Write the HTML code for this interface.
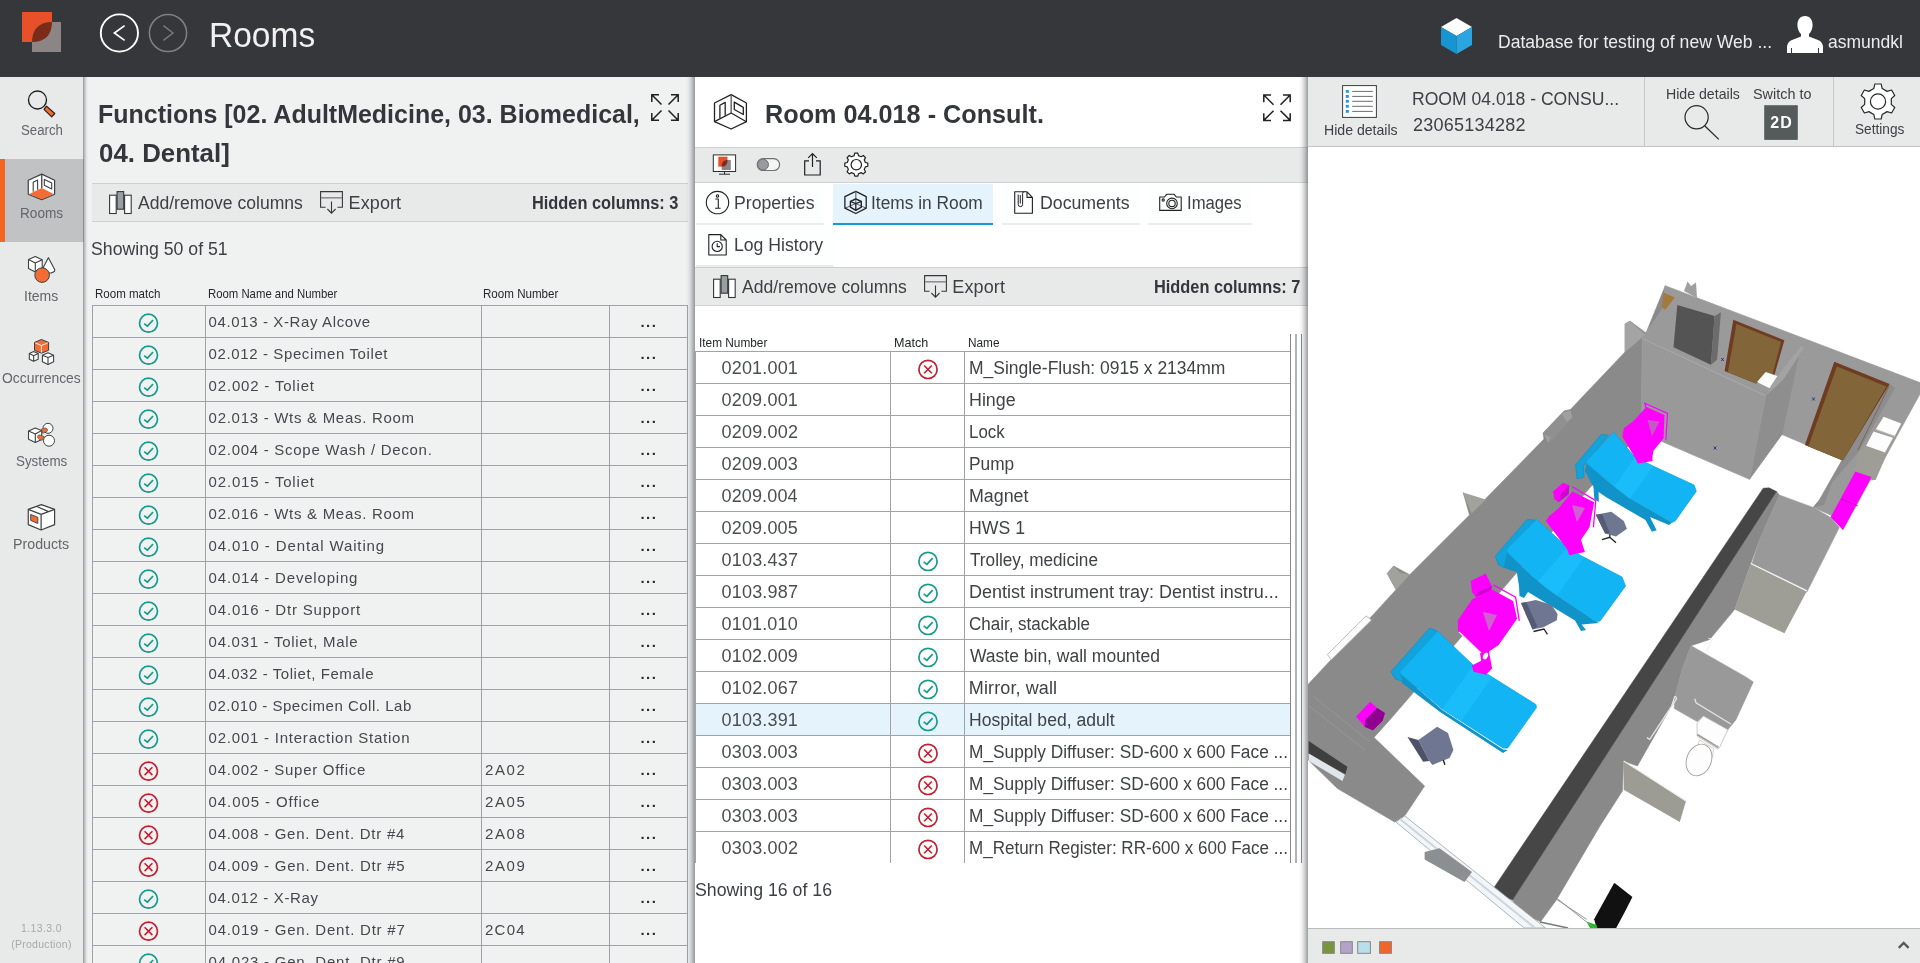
<!DOCTYPE html>
<html lang="en">
<head>
<meta charset="utf-8">
<title>Rooms</title>
<style>
*{box-sizing:border-box;margin:0;padding:0}
html,body{width:1920px;height:963px;overflow:hidden;background:#fff}
body{font-family:"Liberation Sans",sans-serif;color:#3d4044;font-size:16px;position:relative}
#app{position:absolute;left:0;top:0;width:1920px;height:963px;overflow:hidden;will-change:transform}
.abs{position:absolute}
.t{position:absolute;white-space:pre;line-height:1}
svg{position:absolute;overflow:visible}
#top{position:absolute;left:0;top:0;width:1920px;height:77px;background:#35373a}
#nav{position:absolute;left:0;top:77px;width:84px;height:886px;background:#e8eaea}
#p1{position:absolute;left:84px;top:77px;width:611px;height:886px;background:#f0f2f2}
#p2{position:absolute;left:695px;top:77px;width:613px;height:886px;background:#fff}
#p3{position:absolute;left:1308px;top:77px;width:612px;height:886px;background:#fff}
.hl{position:absolute;height:1px;background:#9fa3a5}
.vl{position:absolute;width:1px;background:#9fa3a5}
.tb{position:absolute;background:#e8eaea;border-top:1px solid #cfd1d1;border-bottom:1px solid #cfd1d1}
.nl{color:#5d6064}
</style>
</head>
<body>
<div id="app">
<div id="top"></div>
<svg style="left:0;top:0" width="90" height="77" viewBox="0 0 90 77">
<rect x="22" y="12" width="30" height="30" fill="#e8502a"/>
<path d="M32,42 C32,29 39,22 52,22 L61,22 L61,52 L32,52 Z" fill="#8b8685"/>
<path d="M32,42 C32,29 39,22 52,22 C52,35 45,42 32,42 Z" fill="#7c2b19"/>
</svg>
<svg style="left:95px;top:8px" width="100" height="50" viewBox="95 8 100 50" fill="none">
<circle cx="119.4" cy="33" r="18.6" stroke="#fff" stroke-width="1.9"/>
<path d="M124.6,25.6 L114.4,33 L124.6,40.4" stroke="#fff" stroke-width="1.7"/>
<circle cx="168" cy="33" r="18.6" stroke="#808284" stroke-width="1.5"/>
<path d="M163.4,25.6 L173,33 L163.4,40.4" stroke="#77797b" stroke-width="1.5"/>
</svg>
<span class="t" style="left:209.45px;top:17.20px;font-size:35.2px;color:#f1f1f1;transform:scaleX(0.9524);transform-origin:0 0">Rooms</span>
<svg style="left:1436px;top:14px" width="42" height="46" viewBox="1436 14 42 46">
<polygon points="1441,27 1456.5,18 1472,27 1456.5,36" fill="#fdfdfd"/>
<polygon points="1441,27 1456.5,36 1456.5,54 1441,45" fill="#1794d1"/>
<polygon points="1472,27 1456.5,36 1456.5,54 1472,45" fill="#2aa5df"/>
</svg>
<span class="t" style="left:1497.96px;top:32.55px;font-size:18.5px;color:#ececec;transform:scaleX(0.9495);transform-origin:0 0">Database for testing of new Web ...</span>
<svg style="left:1784px;top:14px" width="42" height="42" viewBox="1784 14 42 42">
<path d="M1805,16 c5.2,0 7.6,4.2 7.6,9 c0,4 -1.6,7.2 -3.6,9 l0,2.6 l9,3.4 c3,1.2 5,3.6 5,7 l0,6 l-4,0 l0,-5 l-1,0 l0,5 l-26,0 l0,-5 l-1,0 l0,5 l-4,0 l0,-6 c0,-3.4 2,-5.8 5,-7 l9,-3.4 l0,-2.6 c-2,-1.8 -3.6,-5 -3.6,-9 c0,-4.8 2.4,-9 7.6,-9 z" fill="#fff"/>
</svg>
<span class="t" style="left:1828.26px;top:32.55px;font-size:18.5px;color:#ececec;transform:scaleX(0.9460);transform-origin:0 0">asmundkl</span>
<div id="nav"></div>
<div class="abs" style="left:0px;top:159px;width:83.5px;height:83px;background:#c0c2c3;"></div>
<div class="abs" style="left:0px;top:159px;width:4.5px;height:83px;background:#f26522;"></div>
<svg style="left:0;top:77px" width="84" height="480" viewBox="0 77 84 480" fill="none" stroke-linejoin="round">
<circle cx="37.5" cy="100" r="9" stroke="#1b1b1b" stroke-width="1.35"/>
<polygon points="46.5,106.2 54.8,113.5 51.7,116.8 44,109.3" fill="#f26a2e" stroke="#1b1b1b" stroke-width="1.1"/>
<!-- rooms -->
<polygon points="41.75,174.1 54.6,180.3 54.6,194.2 41.75,199.6 28.25,194.2 28.25,180.3" fill="#fff" stroke="#3c4144" stroke-width="1.2"/>
<polygon points="41.75,188 53.6,193.9 41.75,199.2 29.3,193.9" fill="#f26c33"/>
<path d="M41.75,174.1 V188" stroke="#3c4144" stroke-width="1.3"/>
<path d="M33.2,191.7 V182.2 L37.6,180.1 V189.7" stroke="#3c4144" stroke-width="1.1"/>
<polygon points="44.3,179.4 51.7,183 51.7,189 44.3,185.3" stroke="#3c4144" stroke-width="1.1"/>
<!-- items -->
<polygon points="35.3,256.5 42.2,259.8 42.2,268.5 35.3,272 28.5,268.5 28.5,259.6" fill="#fff" stroke="#3c4144" stroke-width="1.1"/>
<path d="M28.5,259.6 L35.3,263.1 L42.2,259.8 M35.3,263.1 V272" stroke="#3c4144" stroke-width="1.1"/>
<path d="M48.4,257.7 L43.2,267.5 Q46,274 51.3,272.9 Q55,272 54.8,269.8 Z" fill="#fff" stroke="#3c4144" stroke-width="1.1"/>
<circle cx="42.1" cy="275.1" r="7.3" fill="#f26c33" stroke="#3c4144" stroke-width="1"/>
<!-- occurrences -->
<polygon points="41.4,339.5 48.6,342.4 48.6,350.3 41.4,353.2 34.5,350.3 34.5,342.4" fill="#f26c33" stroke="#3c4144" stroke-width="1"/>
<path d="M35.3,342.9 L41.4,345.5 L47.8,342.9 M41.4,345.5 V352.5" stroke="#fff" stroke-width="0.9"/>
<polygon points="33.65,351.5 38.2,353.6 38.2,359.2 33.65,361.3 29.3,359.2 29.3,353.6" fill="#fff" stroke="#3c4144" stroke-width="1.1"/>
<path d="M29.3,353.6 L33.65,355.7 L38.2,353.6 M33.65,355.7 V361.3" stroke="#3c4144" stroke-width="1.1"/>
<polygon points="48,352.8 53.6,355.3 53.6,361.7 48,364.4 42.4,361.7 42.4,355.3" fill="#fff" stroke="#3c4144" stroke-width="1.1"/>
<path d="M42.4,355.3 L48,357.5 L53.6,355.3 M48,357.5 V364.4" stroke="#3c4144" stroke-width="1.1"/>
<!-- systems -->
<polygon points="35.3,428.1 41.7,430.4 41.7,439.6 35.3,442.4 28.5,439.3 28.5,431" fill="#fff" stroke="#3c4144" stroke-width="1.1"/>
<path d="M28.5,431 L35.3,433.9 L41.7,430.4 M35.3,433.9 V442.4" stroke="#3c4144" stroke-width="1.1"/>
<circle cx="48" cy="428.3" r="5" fill="#fff" stroke="#3c4144" stroke-width="1"/>
<circle cx="49" cy="440.7" r="5.5" fill="#fff" stroke="#3c4144" stroke-width="1"/>
<path d="M41.5,429.1 L45.1,427.9 Q48,428.6 47.6,430.4 L46.7,431.6 L42.6,433.3 Z" fill="#f26c33" stroke="#3c4144" stroke-width="0.6"/>
<path d="M37.6,436.2 Q38.2,434.6 39.7,434.9 L44.2,436.6 L42.2,440.3 L39.3,439.5 Q37.2,438.3 37.6,436.2 Z" fill="#f26c33" stroke="#3c4144" stroke-width="0.6"/>
<!-- products -->
<polygon points="41.4,504.6 54.6,509.4 54.6,524.6 41.1,530 28.25,524.6 28.25,509.4" fill="#fff" stroke="#3c4144" stroke-width="1.2"/>
<path d="M28.25,509.4 L41.1,514.4 L54.6,509.4 M41.1,514.4 V530 M36.8,506.5 L48.6,511.6" stroke="#3c4144" stroke-width="1.2"/>
<polygon points="30.7,514.4 37.8,517.3 37.8,523.5 30.7,520.4" fill="#f26c33" stroke="#3c4144" stroke-width="0.9"/>
</svg>
<span class="t" style="left:20.65px;top:122.10px;font-size:15.4px;color:#63666a;transform:scaleX(0.8605);transform-origin:0 0">Search</span>
<span class="t" style="left:19.63px;top:205.10px;font-size:15.4px;color:#63666a;transform:scaleX(0.8843);transform-origin:0 0">Rooms</span>
<span class="t" style="left:23.95px;top:288.10px;font-size:15.4px;color:#63666a;transform:scaleX(0.9113);transform-origin:0 0">Items</span>
<span class="t" style="left:2.04px;top:370.10px;font-size:15.4px;color:#63666a;transform:scaleX(0.9027);transform-origin:0 0">Occurrences</span>
<span class="t" style="left:15.79px;top:453.10px;font-size:15.4px;color:#63666a;transform:scaleX(0.8691);transform-origin:0 0">Systems</span>
<span class="t" style="left:13.08px;top:536.10px;font-size:15.4px;color:#63666a;transform:scaleX(0.9248);transform-origin:0 0">Products</span>
<span class="t" style="left:20.95px;top:923.05px;font-size:10.5px;letter-spacing:0.394px;color:#a7a9ab">1.13.3.0</span>
<span class="t" style="left:11.15px;top:939.05px;font-size:10.5px;letter-spacing:0.282px;color:#a7a9ab">(Production)</span>
<div id="p1"></div>
<span class="t" style="left:98.33px;top:101.30px;font-size:26px;font-weight:bold;color:#33363a;transform:scaleX(0.9608);transform-origin:0 0">Functions [02. AdultMedicine, 03. Biomedical,</span>
<span class="t" style="left:98.98px;top:140.30px;font-size:26px;font-weight:bold;color:#33363a;transform:scaleX(0.9945);transform-origin:0 0">04. Dental]</span>
<svg style="left:640px;top:88px" width="50" height="40" viewBox="640 88 50 40"><g stroke="#1e2022" stroke-width="1.5" fill="none"><path d="M661.5,104.5 L651.8,94.8 M659,94.8 H651.8 V102"/><path d="M668.5,104.5 L678.2,94.8 M671,94.8 H678.2 V102"/><path d="M661.5,110.5 L651.8,120.2 M659,120.2 H651.8 V113"/><path d="M668.5,110.5 L678.2,120.2 M671,120.2 H678.2 V113"/></g></svg>
<div class="tb" style="left:92px;top:183px;width:596px;height:39px"></div>
<svg style="left:100px;top:186px" width="260" height="34" viewBox="100 186 260 34"><g stroke="#33383b" stroke-width="1.1"><rect x="109.6" y="195.2" width="6.6" height="18.3" fill="#fff"/><rect x="124.6" y="195.2" width="6.6" height="18.3" fill="#fff"/><rect x="117.1" y="191.6" width="6.6" height="17.6" fill="#9a9ea0"/></g><g stroke="#33383b" stroke-width="1.1" fill="none"><path d="M325.6,207.3 H320.6 V191.6 H342.4 V207.3 H337.4"/><path d="M321,197.8 H342" stroke="#8d9194" stroke-width="1.6"/><path d="M331.5,201.5 V213 M327.4,209 L331.5,213.2 L335.6,209"/></g></svg>
<span class="t" style="left:138.27px;top:194.30px;font-size:18px;color:#3d4044;transform:scaleX(0.9751);transform-origin:0 0">Add/remove columns</span>
<span class="t" style="left:348.52px;top:194.30px;font-size:18px;letter-spacing:0.115px;color:#3d4044">Export</span>
<span class="t" style="left:531.71px;top:194.30px;font-size:18px;font-weight:bold;color:#33363a;transform:scaleX(0.9091);transform-origin:0 0">Hidden columns: 3</span>
<span class="t" style="left:90.95px;top:240.30px;font-size:18px;color:#3d4044;transform:scaleX(0.9824);transform-origin:0 0">Showing 50 of 51</span>
<span class="t" style="left:94.55px;top:287.30px;font-size:13px;color:#25282b;transform:scaleX(0.8880);transform-origin:0 0">Room match</span>
<span class="t" style="left:207.67px;top:287.30px;font-size:13px;color:#25282b;transform:scaleX(0.8730);transform-origin:0 0">Room Name and Number</span>
<span class="t" style="left:483.45px;top:287.30px;font-size:13px;color:#25282b;transform:scaleX(0.8913);transform-origin:0 0">Room Number</span>
<div class="hl" style="left:92px;top:305px;width:596px"></div>
<div class="hl" style="left:92px;top:337px;width:596px"></div>
<div class="hl" style="left:92px;top:369px;width:596px"></div>
<div class="hl" style="left:92px;top:401px;width:596px"></div>
<div class="hl" style="left:92px;top:433px;width:596px"></div>
<div class="hl" style="left:92px;top:465px;width:596px"></div>
<div class="hl" style="left:92px;top:497px;width:596px"></div>
<div class="hl" style="left:92px;top:529px;width:596px"></div>
<div class="hl" style="left:92px;top:561px;width:596px"></div>
<div class="hl" style="left:92px;top:593px;width:596px"></div>
<div class="hl" style="left:92px;top:625px;width:596px"></div>
<div class="hl" style="left:92px;top:657px;width:596px"></div>
<div class="hl" style="left:92px;top:689px;width:596px"></div>
<div class="hl" style="left:92px;top:721px;width:596px"></div>
<div class="hl" style="left:92px;top:753px;width:596px"></div>
<div class="hl" style="left:92px;top:785px;width:596px"></div>
<div class="hl" style="left:92px;top:817px;width:596px"></div>
<div class="hl" style="left:92px;top:849px;width:596px"></div>
<div class="hl" style="left:92px;top:881px;width:596px"></div>
<div class="hl" style="left:92px;top:913px;width:596px"></div>
<div class="hl" style="left:92px;top:945px;width:596px"></div>
<div class="vl" style="left:92px;top:305px;height:658px"></div>
<div class="vl" style="left:205px;top:305px;height:658px"></div>
<div class="vl" style="left:481px;top:305px;height:658px"></div>
<div class="vl" style="left:609px;top:305px;height:658px"></div>
<div class="vl" style="left:687px;top:305px;height:658px"></div>
<span class="t" style="left:208.61px;top:314.30px;font-size:15px;letter-spacing:0.615px;color:#45484c">04.013 - X-Ray Alcove</span>
<span class="t" style="left:640.58px;top:314.30px;font-size:15px;letter-spacing:1.368px;font-weight:bold;color:#2a2d30">...</span>
<span class="t" style="left:208.61px;top:346.30px;font-size:15px;letter-spacing:0.612px;color:#45484c">02.012 - Specimen Toilet</span>
<span class="t" style="left:640.58px;top:346.30px;font-size:15px;letter-spacing:1.368px;font-weight:bold;color:#2a2d30">...</span>
<span class="t" style="left:208.61px;top:378.30px;font-size:15px;letter-spacing:0.816px;color:#45484c">02.002 - Toliet</span>
<span class="t" style="left:640.58px;top:378.30px;font-size:15px;letter-spacing:1.368px;font-weight:bold;color:#2a2d30">...</span>
<span class="t" style="left:208.61px;top:410.30px;font-size:15px;letter-spacing:0.711px;color:#45484c">02.013 - Wts &amp; Meas. Room</span>
<span class="t" style="left:640.58px;top:410.30px;font-size:15px;letter-spacing:1.368px;font-weight:bold;color:#2a2d30">...</span>
<span class="t" style="left:208.61px;top:442.30px;font-size:15px;letter-spacing:0.723px;color:#45484c">02.004 - Scope Wash / Decon.</span>
<span class="t" style="left:640.58px;top:442.30px;font-size:15px;letter-spacing:1.368px;font-weight:bold;color:#2a2d30">...</span>
<span class="t" style="left:208.61px;top:474.30px;font-size:15px;letter-spacing:0.816px;color:#45484c">02.015 - Toliet</span>
<span class="t" style="left:640.58px;top:474.30px;font-size:15px;letter-spacing:1.368px;font-weight:bold;color:#2a2d30">...</span>
<span class="t" style="left:208.61px;top:506.30px;font-size:15px;letter-spacing:0.711px;color:#45484c">02.016 - Wts &amp; Meas. Room</span>
<span class="t" style="left:640.58px;top:506.30px;font-size:15px;letter-spacing:1.368px;font-weight:bold;color:#2a2d30">...</span>
<span class="t" style="left:208.61px;top:538.30px;font-size:15px;letter-spacing:0.880px;color:#45484c">04.010 - Dental Waiting</span>
<span class="t" style="left:640.58px;top:538.30px;font-size:15px;letter-spacing:1.368px;font-weight:bold;color:#2a2d30">...</span>
<span class="t" style="left:208.61px;top:570.30px;font-size:15px;letter-spacing:0.810px;color:#45484c">04.014 - Developing</span>
<span class="t" style="left:640.58px;top:570.30px;font-size:15px;letter-spacing:1.368px;font-weight:bold;color:#2a2d30">...</span>
<span class="t" style="left:208.61px;top:602.30px;font-size:15px;letter-spacing:0.830px;color:#45484c">04.016 - Dtr Support</span>
<span class="t" style="left:640.58px;top:602.30px;font-size:15px;letter-spacing:1.368px;font-weight:bold;color:#2a2d30">...</span>
<span class="t" style="left:208.61px;top:634.30px;font-size:15px;letter-spacing:0.712px;color:#45484c">04.031 - Toliet, Male</span>
<span class="t" style="left:640.58px;top:634.30px;font-size:15px;letter-spacing:1.368px;font-weight:bold;color:#2a2d30">...</span>
<span class="t" style="left:208.61px;top:666.30px;font-size:15px;letter-spacing:0.575px;color:#45484c">04.032 - Toliet, Female</span>
<span class="t" style="left:640.58px;top:666.30px;font-size:15px;letter-spacing:1.368px;font-weight:bold;color:#2a2d30">...</span>
<span class="t" style="left:208.61px;top:698.30px;font-size:15px;letter-spacing:0.513px;color:#45484c">02.010 - Specimen Coll. Lab</span>
<span class="t" style="left:640.58px;top:698.30px;font-size:15px;letter-spacing:1.368px;font-weight:bold;color:#2a2d30">...</span>
<span class="t" style="left:208.61px;top:730.30px;font-size:15px;letter-spacing:0.772px;color:#45484c">02.001 - Interaction Station</span>
<span class="t" style="left:640.58px;top:730.30px;font-size:15px;letter-spacing:1.368px;font-weight:bold;color:#2a2d30">...</span>
<span class="t" style="left:208.61px;top:762.30px;font-size:15px;letter-spacing:0.722px;color:#45484c">04.002 - Super Office</span>
<span class="t" style="left:484.95px;top:762.30px;font-size:15px;letter-spacing:1.654px;color:#45484c">2A02</span>
<span class="t" style="left:640.58px;top:762.30px;font-size:15px;letter-spacing:1.368px;font-weight:bold;color:#2a2d30">...</span>
<span class="t" style="left:208.61px;top:794.30px;font-size:15px;letter-spacing:0.909px;color:#45484c">04.005 - Office</span>
<span class="t" style="left:484.95px;top:794.30px;font-size:15px;letter-spacing:1.612px;color:#45484c">2A05</span>
<span class="t" style="left:640.58px;top:794.30px;font-size:15px;letter-spacing:1.368px;font-weight:bold;color:#2a2d30">...</span>
<span class="t" style="left:208.61px;top:826.30px;font-size:15px;letter-spacing:0.762px;color:#45484c">04.008 - Gen. Dent. Dtr #4</span>
<span class="t" style="left:484.95px;top:826.30px;font-size:15px;letter-spacing:1.620px;color:#45484c">2A08</span>
<span class="t" style="left:640.58px;top:826.30px;font-size:15px;letter-spacing:1.368px;font-weight:bold;color:#2a2d30">...</span>
<span class="t" style="left:208.61px;top:858.30px;font-size:15px;letter-spacing:0.770px;color:#45484c">04.009 - Gen. Dent. Dtr #5</span>
<span class="t" style="left:484.95px;top:858.30px;font-size:15px;letter-spacing:1.639px;color:#45484c">2A09</span>
<span class="t" style="left:640.58px;top:858.30px;font-size:15px;letter-spacing:1.368px;font-weight:bold;color:#2a2d30">...</span>
<span class="t" style="left:208.61px;top:890.30px;font-size:15px;letter-spacing:0.663px;color:#45484c">04.012 - X-Ray</span>
<span class="t" style="left:640.58px;top:890.30px;font-size:15px;letter-spacing:1.368px;font-weight:bold;color:#2a2d30">...</span>
<span class="t" style="left:208.61px;top:922.30px;font-size:15px;letter-spacing:0.775px;color:#45484c">04.019 - Gen. Dent. Dtr #7</span>
<span class="t" style="left:484.95px;top:922.30px;font-size:15px;letter-spacing:1.278px;color:#45484c">2C04</span>
<span class="t" style="left:640.58px;top:922.30px;font-size:15px;letter-spacing:1.368px;font-weight:bold;color:#2a2d30">...</span>
<span class="t" style="left:208.61px;top:954.30px;font-size:15px;letter-spacing:0.773px;color:#45484c">04.023 - Gen. Dent. Dtr #9</span>
<span class="t" style="left:640.58px;top:954.30px;font-size:15px;letter-spacing:1.368px;font-weight:bold;color:#2a2d30">...</span>
<svg style="left:130px;top:305px" width="40" height="658" viewBox="130 305 40 658"><circle cx="148.5" cy="323.2" r="9" stroke="#17998b" stroke-width="1.7" fill="none"/><path d="M144.2,323.7 L147.4,326.2 L153.1,320.0" stroke="#17998b" stroke-width="1.7" fill="none"/><circle cx="148.5" cy="355.2" r="9" stroke="#17998b" stroke-width="1.7" fill="none"/><path d="M144.2,355.7 L147.4,358.2 L153.1,352.0" stroke="#17998b" stroke-width="1.7" fill="none"/><circle cx="148.5" cy="387.2" r="9" stroke="#17998b" stroke-width="1.7" fill="none"/><path d="M144.2,387.7 L147.4,390.2 L153.1,384.0" stroke="#17998b" stroke-width="1.7" fill="none"/><circle cx="148.5" cy="419.2" r="9" stroke="#17998b" stroke-width="1.7" fill="none"/><path d="M144.2,419.7 L147.4,422.2 L153.1,416.0" stroke="#17998b" stroke-width="1.7" fill="none"/><circle cx="148.5" cy="451.2" r="9" stroke="#17998b" stroke-width="1.7" fill="none"/><path d="M144.2,451.7 L147.4,454.2 L153.1,448.0" stroke="#17998b" stroke-width="1.7" fill="none"/><circle cx="148.5" cy="483.2" r="9" stroke="#17998b" stroke-width="1.7" fill="none"/><path d="M144.2,483.7 L147.4,486.2 L153.1,480.0" stroke="#17998b" stroke-width="1.7" fill="none"/><circle cx="148.5" cy="515.2" r="9" stroke="#17998b" stroke-width="1.7" fill="none"/><path d="M144.2,515.7 L147.4,518.2 L153.1,512.0" stroke="#17998b" stroke-width="1.7" fill="none"/><circle cx="148.5" cy="547.2" r="9" stroke="#17998b" stroke-width="1.7" fill="none"/><path d="M144.2,547.7 L147.4,550.2 L153.1,544.0" stroke="#17998b" stroke-width="1.7" fill="none"/><circle cx="148.5" cy="579.2" r="9" stroke="#17998b" stroke-width="1.7" fill="none"/><path d="M144.2,579.7 L147.4,582.2 L153.1,576.0" stroke="#17998b" stroke-width="1.7" fill="none"/><circle cx="148.5" cy="611.2" r="9" stroke="#17998b" stroke-width="1.7" fill="none"/><path d="M144.2,611.7 L147.4,614.2 L153.1,608.0" stroke="#17998b" stroke-width="1.7" fill="none"/><circle cx="148.5" cy="643.2" r="9" stroke="#17998b" stroke-width="1.7" fill="none"/><path d="M144.2,643.7 L147.4,646.2 L153.1,640.0" stroke="#17998b" stroke-width="1.7" fill="none"/><circle cx="148.5" cy="675.2" r="9" stroke="#17998b" stroke-width="1.7" fill="none"/><path d="M144.2,675.7 L147.4,678.2 L153.1,672.0" stroke="#17998b" stroke-width="1.7" fill="none"/><circle cx="148.5" cy="707.2" r="9" stroke="#17998b" stroke-width="1.7" fill="none"/><path d="M144.2,707.7 L147.4,710.2 L153.1,704.0" stroke="#17998b" stroke-width="1.7" fill="none"/><circle cx="148.5" cy="739.2" r="9" stroke="#17998b" stroke-width="1.7" fill="none"/><path d="M144.2,739.7 L147.4,742.2 L153.1,736.0" stroke="#17998b" stroke-width="1.7" fill="none"/><circle cx="148.5" cy="771.2" r="9" stroke="#c1202e" stroke-width="1.7" fill="none"/><path d="M144.6,767.3000000000001 L152.4,775.1 M152.4,767.3000000000001 L144.6,775.1" stroke="#c1202e" stroke-width="1.6" fill="none"/><circle cx="148.5" cy="803.2" r="9" stroke="#c1202e" stroke-width="1.7" fill="none"/><path d="M144.6,799.3000000000001 L152.4,807.1 M152.4,799.3000000000001 L144.6,807.1" stroke="#c1202e" stroke-width="1.6" fill="none"/><circle cx="148.5" cy="835.2" r="9" stroke="#c1202e" stroke-width="1.7" fill="none"/><path d="M144.6,831.3000000000001 L152.4,839.1 M152.4,831.3000000000001 L144.6,839.1" stroke="#c1202e" stroke-width="1.6" fill="none"/><circle cx="148.5" cy="867.2" r="9" stroke="#c1202e" stroke-width="1.7" fill="none"/><path d="M144.6,863.3000000000001 L152.4,871.1 M152.4,863.3000000000001 L144.6,871.1" stroke="#c1202e" stroke-width="1.6" fill="none"/><circle cx="148.5" cy="899.2" r="9" stroke="#17998b" stroke-width="1.7" fill="none"/><path d="M144.2,899.7 L147.4,902.2 L153.1,896.0" stroke="#17998b" stroke-width="1.7" fill="none"/><circle cx="148.5" cy="931.2" r="9" stroke="#c1202e" stroke-width="1.7" fill="none"/><path d="M144.6,927.3000000000001 L152.4,935.1 M152.4,927.3000000000001 L144.6,935.1" stroke="#c1202e" stroke-width="1.6" fill="none"/><circle cx="148.5" cy="963.2" r="9" stroke="#17998b" stroke-width="1.7" fill="none"/><path d="M144.2,963.7 L147.4,966.2 L153.1,960.0" stroke="#17998b" stroke-width="1.7" fill="none"/></svg>
<div id="p2"></div>
<svg style="left:705px;top:88px" width="50" height="48" viewBox="705 88 50 48" fill="none" stroke="#1f2123" stroke-width="1.3" stroke-linejoin="round">
<polygon points="731.15,94.6 746.4,103 746.4,121.7 731.15,129 714.5,121.7 714.5,103"/>
<path d="M714.5,121.7 L731.15,113 L746.4,121.7"/>
<path d="M731.15,94.6 V113" stroke="#555"/>
<path d="M719.9,118.3 V105.2 L725.2,102.4 V115.8"/>
<polygon points="734.3,102.1 743.3,107.4 743.3,114.5 734.3,109.5"/>
</svg>
<span class="t" style="left:764.81px;top:101.30px;font-size:26px;font-weight:bold;color:#33363a;transform:scaleX(0.9702);transform-origin:0 0">Room 04.018 - Consult.</span>
<svg style="left:1255px;top:88px" width="50" height="40" viewBox="1255 88 50 40"><g stroke="#1e2022" stroke-width="1.5" fill="none"><path d="M1273.5,104.7 L1263.8,95.0 M1271,95.0 H1263.8 V102.2"/><path d="M1280.5,104.7 L1290.2,95.0 M1283,95.0 H1290.2 V102.2"/><path d="M1273.5,110.7 L1263.8,120.4 M1271,120.4 H1263.8 V113.2"/><path d="M1280.5,110.7 L1290.2,120.4 M1283,120.4 H1290.2 V113.2"/></g></svg>
<div class="tb" style="left:695px;top:147px;width:613px;height:36px"></div>
<svg style="left:705px;top:148px" width="180" height="34" viewBox="705 148 180 34" fill="none">
<rect x="713.3" y="154.9" width="22.3" height="16.6" fill="#fff" stroke="#2b2e30" stroke-width="1"/>
<path d="M719,174.2 H730 M724.5,171.5 V174" stroke="#2b2e30" stroke-width="1"/>
<rect x="718.3" y="156.7" width="9.2" height="10" fill="#e8502a"/>
<path d="M721.7,166.7 A6,6 0 0 1 727.5,160 H730.8 V170 H721.7 Z" fill="#8b8685"/>
<path d="M721.7,166.7 C721.7,162.5 723.5,160 727.5,160 C727.5,164.5 725.5,166.7 721.7,166.7 Z" fill="#7c2b19"/>
<rect x="757.2" y="158.7" width="22.4" height="11.8" rx="5.9" stroke="#6d7173" stroke-width="1.2" fill="#f4f5f5"/>
<circle cx="763.1" cy="164.6" r="5.4" fill="#979b9d" stroke="#6d7173" stroke-width="1"/>
<path d="M809,160.9 H804.7 V175 H820.2 V160.9 H816" stroke="#1f2123" stroke-width="1.2"/>
<path d="M812.5,167 V153.6 M808.2,157.9 L812.5,153.5 L816.8,157.9" stroke="#1f2123" stroke-width="1.2"/>
<path d="M854.76,153.20 L857.84,153.20 L858.47,155.66 L861.16,156.77 L863.34,155.48 L865.52,157.66 L864.23,159.84 L865.34,162.53 L867.80,163.16 L867.80,166.24 L865.34,166.87 L864.23,169.56 L865.52,171.74 L863.34,173.92 L861.16,172.63 L858.47,173.74 L857.84,176.20 L854.76,176.20 L854.13,173.74 L851.44,172.63 L849.26,173.92 L847.08,171.74 L848.37,169.56 L847.26,166.87 L844.80,166.24 L844.80,163.16 L847.26,162.53 L848.37,159.84 L847.08,157.66 L849.26,155.48 L851.44,156.77 L854.13,155.66 Z" fill="#fff" stroke="#1f2123" stroke-width="1.2" stroke-linejoin="round"/><circle cx="856.3" cy="164.7" r="5.2" fill="#fff" stroke="#1f2123" stroke-width="1.2"/>
</svg>
<div class="abs" style="left:696.3px;top:183.5px;width:127.70000000000005px;height:41.5px;background:#fdfefe;border-bottom:2px solid #ececec"></div><div class="abs" style="left:833px;top:183.5px;width:160px;height:41.5px;background:#e5f4fc;border-bottom:2px solid #1499d6"></div><div class="abs" style="left:1002px;top:183.5px;width:137.70000000000005px;height:41.5px;background:#fdfefe;border-bottom:2px solid #ececec"></div><div class="abs" style="left:1148.3px;top:183.5px;width:103.40000000000009px;height:41.5px;background:#fdfefe;border-bottom:2px solid #ececec"></div><div class="abs" style="left:696.3px;top:225.5px;width:137.4000000000001px;height:41.5px;background:#fdfefe;border-bottom:2px solid #ececec"></div>
<svg style="left:700px;top:186px" width="500" height="76" viewBox="700 186 500 76" fill="none" stroke="#1f2123" stroke-width="1.1" stroke-linejoin="round">
<circle cx="717.5" cy="202.6" r="11.2"/>
<circle cx="717.5" cy="195.9" r="1.2"/>
<path d="M715.3,199 H718.3 V208 M715,208.3 H720.6"/>
<polygon points="855.8,191.3 866.2,196.6 866.2,208.2 855.8,213.5 844.9,208.2 844.9,196.6" stroke-width="1.3"/>
<path d="M855.8,191.3 V203.6" stroke="#6a6e70" stroke-width="1.2"/>
<path d="M844.9,208.2 L855.8,203.6 L866.2,208.2" stroke-width="0.7"/>
<polygon points="855.8,198.9 861.3,201.5 861.3,207.2 855.8,210.4 850.4,207.2 850.4,201.5" stroke-width="1.4"/>
<path d="M850.4,201.5 L855.8,203.65 L861.3,201.5 M855.8,203.65 V210.4" stroke-width="1.3"/>
<path d="M1014.7,191.8 H1027 L1032.4,197.4 V213.3 H1014.7 Z M1027,191.8 V197.4 H1032.4"/>
<path d="M1018.2,194.5 V204.5 Q1018.2,206.6 1020.4,206.6 Q1022.6,206.6 1022.6,204.5 V193.5 Q1022.6,191.6 1024.6,191.6 M1020.3,195 V203.5" stroke-width="1"/>
<path d="M1159.7,197 H1164.5 L1166.6,194.3 H1174.2 L1176.3,197 H1181.2 V210.4 H1159.7 Z"/>
<circle cx="1172" cy="203.4" r="5.3"/><circle cx="1172" cy="203.4" r="3.2"/><circle cx="1163.2" cy="200" r="1.1"/>
<path d="M708.8,234.6 H720.8 L726.2,240 V255 H708.8 Z M720.8,234.6 V240 H726.2"/>
<circle cx="717.2" cy="246.4" r="5.1"/><path d="M717.2,243.2 V246.6 H720"/>
</svg>
<span class="t" style="left:734.15px;top:194.30px;font-size:18px;color:#3d4044;transform:scaleX(0.9810);transform-origin:0 0">Properties</span>
<span class="t" style="left:871.40px;top:194.30px;font-size:18px;color:#3d4044;transform:scaleX(0.9629);transform-origin:0 0">Items in Room</span>
<span class="t" style="left:1039.85px;top:194.30px;font-size:18px;color:#3d4044;transform:scaleX(0.9840);transform-origin:0 0">Documents</span>
<span class="t" style="left:1186.76px;top:194.30px;font-size:18px;color:#3d4044;transform:scaleX(0.9256);transform-origin:0 0">Images</span>
<span class="t" style="left:733.85px;top:236.30px;font-size:18px;color:#3d4044;transform:scaleX(0.9795);transform-origin:0 0">Log History</span>
<div class="tb" style="left:695px;top:267px;width:613px;height:39px"></div>
<svg style="left:705px;top:270px" width="260" height="34" viewBox="705 270 260 34"><g stroke="#33383b" stroke-width="1.1"><rect x="713.6" y="279.2" width="6.6" height="18.3" fill="#fff"/><rect x="728.6" y="279.2" width="6.6" height="18.3" fill="#fff"/><rect x="721.1" y="275.6" width="6.6" height="17.6" fill="#9a9ea0"/></g><g stroke="#33383b" stroke-width="1.1" fill="none"><path d="M929.6,291.3 H924.6 V275.6 H946.4 V291.3 H941.4"/><path d="M925,281.8 H946" stroke="#8d9194" stroke-width="1.6"/><path d="M935.5,285.5 V297 M931.4,293 L935.5,297.2 L939.6,293"/></g></svg>
<span class="t" style="left:741.97px;top:278.30px;font-size:18px;color:#3d4044;transform:scaleX(0.9751);transform-origin:0 0">Add/remove columns</span>
<span class="t" style="left:952.32px;top:278.30px;font-size:18px;letter-spacing:0.115px;color:#3d4044">Export</span>
<span class="t" style="left:1153.61px;top:278.30px;font-size:18px;font-weight:bold;color:#33363a;transform:scaleX(0.9087);transform-origin:0 0">Hidden columns: 7</span>
<span class="t" style="left:699.31px;top:336.30px;font-size:13px;color:#25282b;transform:scaleX(0.9101);transform-origin:0 0">Item Number</span>
<span class="t" style="left:893.97px;top:336.30px;font-size:13px;color:#25282b;transform:scaleX(0.9673);transform-origin:0 0">Match</span>
<span class="t" style="left:968.33px;top:336.30px;font-size:13px;color:#25282b;transform:scaleX(0.9079);transform-origin:0 0">Name</span>
<div class="abs" style="left:696px;top:704px;width:594px;height:31px;background:#e5f4fc;"></div>
<div class="hl" style="left:695px;top:351px;width:596px"></div>
<div class="hl" style="left:695px;top:383px;width:596px"></div>
<div class="hl" style="left:695px;top:415px;width:596px"></div>
<div class="hl" style="left:695px;top:447px;width:596px"></div>
<div class="hl" style="left:695px;top:479px;width:596px"></div>
<div class="hl" style="left:695px;top:511px;width:596px"></div>
<div class="hl" style="left:695px;top:543px;width:596px"></div>
<div class="hl" style="left:695px;top:575px;width:596px"></div>
<div class="hl" style="left:695px;top:607px;width:596px"></div>
<div class="hl" style="left:695px;top:639px;width:596px"></div>
<div class="hl" style="left:695px;top:671px;width:596px"></div>
<div class="hl" style="left:695px;top:703px;width:596px"></div>
<div class="hl" style="left:695px;top:735px;width:596px"></div>
<div class="hl" style="left:695px;top:767px;width:596px"></div>
<div class="hl" style="left:695px;top:799px;width:596px"></div>
<div class="hl" style="left:695px;top:831px;width:596px"></div>
<div class="vl" style="left:695px;top:351px;height:512px"></div>
<div class="vl" style="left:890px;top:351px;height:512px"></div>
<div class="vl" style="left:964px;top:351px;height:512px"></div>
<div class="vl" style="left:1290px;top:334px;height:529px;background:#85888a"></div>
<div class="vl" style="left:1295px;top:334px;height:529px;width:2px;background:#b0b2b3"></div>
<div class="vl" style="left:1301px;top:334px;height:529px;background:#85888a"></div>
<span class="t" style="left:721.55px;top:359.30px;font-size:18px;letter-spacing:0.179px;color:#4b4e52">0201.001</span>
<span class="t" style="left:968.87px;top:359.30px;font-size:18px;color:#3f4246;transform:scaleX(0.9706);transform-origin:0 0">M_Single-Flush: 0915 x 2134mm</span>
<span class="t" style="left:721.55px;top:391.30px;font-size:18px;letter-spacing:0.179px;color:#4b4e52">0209.001</span>
<span class="t" style="left:968.84px;top:391.30px;font-size:18px;color:#3f4246;transform:scaleX(0.9921);transform-origin:0 0">Hinge</span>
<span class="t" style="left:721.55px;top:423.30px;font-size:18px;letter-spacing:0.183px;color:#4b4e52">0209.002</span>
<span class="t" style="left:968.92px;top:423.30px;font-size:18px;color:#3f4246;transform:scaleX(0.9376);transform-origin:0 0">Lock</span>
<span class="t" style="left:721.55px;top:455.30px;font-size:18px;letter-spacing:0.167px;color:#4b4e52">0209.003</span>
<span class="t" style="left:968.88px;top:455.30px;font-size:18px;color:#3f4246;transform:scaleX(0.9598);transform-origin:0 0">Pump</span>
<span class="t" style="left:721.55px;top:487.30px;font-size:18px;letter-spacing:0.129px;color:#4b4e52">0209.004</span>
<span class="t" style="left:968.84px;top:487.30px;font-size:18px;color:#3f4246;transform:scaleX(0.9908);transform-origin:0 0">Magnet</span>
<span class="t" style="left:721.55px;top:519.30px;font-size:18px;letter-spacing:0.162px;color:#4b4e52">0209.005</span>
<span class="t" style="left:968.85px;top:519.30px;font-size:18px;color:#3f4246;transform:scaleX(0.9824);transform-origin:0 0">HWS 1</span>
<span class="t" style="left:721.55px;top:551.30px;font-size:18px;letter-spacing:0.183px;color:#4b4e52">0103.437</span>
<span class="t" style="left:969.91px;top:551.30px;font-size:18px;color:#3f4246;transform:scaleX(0.9545);transform-origin:0 0">Trolley, medicine</span>
<span class="t" style="left:721.55px;top:583.30px;font-size:18px;letter-spacing:0.183px;color:#4b4e52">0103.987</span>
<span class="t" style="left:968.82px;top:583.30px;font-size:18px;color:#3f4246;transform:scaleX(0.9991);transform-origin:0 0">Dentist instrument tray: Dentist instru...</span>
<span class="t" style="left:721.55px;top:615.30px;font-size:18px;letter-spacing:0.154px;color:#4b4e52">0101.010</span>
<span class="t" style="left:969.44px;top:615.30px;font-size:18px;color:#3f4246;transform:scaleX(0.9441);transform-origin:0 0">Chair, stackable</span>
<span class="t" style="left:721.55px;top:647.30px;font-size:18px;letter-spacing:0.175px;color:#4b4e52">0102.009</span>
<span class="t" style="left:970.22px;top:647.30px;font-size:18px;color:#3f4246;transform:scaleX(0.9717);transform-origin:0 0">Waste bin, wall mounted</span>
<span class="t" style="left:721.55px;top:679.30px;font-size:18px;letter-spacing:0.183px;color:#4b4e52">0102.067</span>
<span class="t" style="left:968.82px;top:679.30px;font-size:18px;letter-spacing:0.115px;color:#3f4246">Mirror, wall</span>
<span class="t" style="left:721.55px;top:711.30px;font-size:18px;letter-spacing:0.179px;color:#4b4e52">0103.391</span>
<span class="t" style="left:968.86px;top:711.30px;font-size:18px;color:#3f4246;transform:scaleX(0.9763);transform-origin:0 0">Hospital bed, adult</span>
<span class="t" style="left:721.55px;top:743.30px;font-size:18px;letter-spacing:0.167px;color:#4b4e52">0303.003</span>
<span class="t" style="left:968.88px;top:743.30px;font-size:18px;color:#3f4246;transform:scaleX(0.9613);transform-origin:0 0">M_Supply Diffuser: SD-600 x 600 Face ...</span>
<span class="t" style="left:721.55px;top:775.30px;font-size:18px;letter-spacing:0.167px;color:#4b4e52">0303.003</span>
<span class="t" style="left:968.88px;top:775.30px;font-size:18px;color:#3f4246;transform:scaleX(0.9613);transform-origin:0 0">M_Supply Diffuser: SD-600 x 600 Face ...</span>
<span class="t" style="left:721.55px;top:807.30px;font-size:18px;letter-spacing:0.167px;color:#4b4e52">0303.003</span>
<span class="t" style="left:968.88px;top:807.30px;font-size:18px;color:#3f4246;transform:scaleX(0.9613);transform-origin:0 0">M_Supply Diffuser: SD-600 x 600 Face ...</span>
<span class="t" style="left:721.55px;top:839.30px;font-size:18px;letter-spacing:0.183px;color:#4b4e52">0303.002</span>
<span class="t" style="left:968.90px;top:839.30px;font-size:18px;color:#3f4246;transform:scaleX(0.9460);transform-origin:0 0">M_Return Register: RR-600 x 600 Face ...</span>
<svg style="left:910px;top:351px" width="40" height="512" viewBox="910 351 40 512"><circle cx="928" cy="369.4" r="9.1" stroke="#c1202e" stroke-width="1.7" fill="none"/><path d="M924.1,365.5 L931.9,373.29999999999995 M931.9,365.5 L924.1,373.29999999999995" stroke="#c1202e" stroke-width="1.6" fill="none"/><circle cx="928" cy="561.4" r="9.1" stroke="#17998b" stroke-width="1.7" fill="none"/><path d="M923.7,561.9 L926.9,564.4 L932.6,558.1999999999999" stroke="#17998b" stroke-width="1.7" fill="none"/><circle cx="928" cy="593.4" r="9.1" stroke="#17998b" stroke-width="1.7" fill="none"/><path d="M923.7,593.9 L926.9,596.4 L932.6,590.1999999999999" stroke="#17998b" stroke-width="1.7" fill="none"/><circle cx="928" cy="625.4" r="9.1" stroke="#17998b" stroke-width="1.7" fill="none"/><path d="M923.7,625.9 L926.9,628.4 L932.6,622.1999999999999" stroke="#17998b" stroke-width="1.7" fill="none"/><circle cx="928" cy="657.4" r="9.1" stroke="#17998b" stroke-width="1.7" fill="none"/><path d="M923.7,657.9 L926.9,660.4 L932.6,654.1999999999999" stroke="#17998b" stroke-width="1.7" fill="none"/><circle cx="928" cy="689.4" r="9.1" stroke="#17998b" stroke-width="1.7" fill="none"/><path d="M923.7,689.9 L926.9,692.4 L932.6,686.1999999999999" stroke="#17998b" stroke-width="1.7" fill="none"/><circle cx="928" cy="721.4" r="9.1" stroke="#17998b" stroke-width="1.7" fill="none"/><path d="M923.7,721.9 L926.9,724.4 L932.6,718.1999999999999" stroke="#17998b" stroke-width="1.7" fill="none"/><circle cx="928" cy="753.4" r="9.1" stroke="#c1202e" stroke-width="1.7" fill="none"/><path d="M924.1,749.5 L931.9,757.3 M931.9,749.5 L924.1,757.3" stroke="#c1202e" stroke-width="1.6" fill="none"/><circle cx="928" cy="785.4" r="9.1" stroke="#c1202e" stroke-width="1.7" fill="none"/><path d="M924.1,781.5 L931.9,789.3 M931.9,781.5 L924.1,789.3" stroke="#c1202e" stroke-width="1.6" fill="none"/><circle cx="928" cy="817.4" r="9.1" stroke="#c1202e" stroke-width="1.7" fill="none"/><path d="M924.1,813.5 L931.9,821.3 M931.9,813.5 L924.1,821.3" stroke="#c1202e" stroke-width="1.6" fill="none"/><circle cx="928" cy="849.4" r="9.1" stroke="#c1202e" stroke-width="1.7" fill="none"/><path d="M924.1,845.5 L931.9,853.3 M931.9,845.5 L924.1,853.3" stroke="#c1202e" stroke-width="1.6" fill="none"/></svg>
<span class="t" style="left:694.69px;top:881.30px;font-size:18px;color:#3d4044;transform:scaleX(0.9854);transform-origin:0 0">Showing 16 of 16</span>
<div id="p3"></div>
<svg style="left:1308px;top:147px" width="612" height="781" viewBox="1308 147 612 781"><clipPath id="sc"><rect x="1308" y="147" width="612" height="781"/></clipPath><g clip-path="url(#sc)"><polygon points="1665.3,285.7 1662.0,310.0 1646.0,333.0 1630.0,321.0 1625.0,324.0 1625.0,352.0 1570.4,409.5 1564.0,411.0 1543.0,433.0 1544.0,439.0 1484.4,500.0 1472.0,512.4 1463.2,492.5 1469.5,515.0 1409.7,574.7 1393.5,566.0 1387.2,573.5 1396.0,589.7 1371.0,617.0 1308.0,684.4 1308.0,759.8 1337.4,788.5 1394.7,822.1 1404.7,815.9 1424.6,786.0 1374.0,737.4 1389.7,720.0 1407.0,700.0 1596.6,480.0 1641.1,432.5 1642.4,338.5 1646.0,333.0" fill="#8a8a8a" stroke="#8a8a8a" stroke-width="0.6" />
<polygon points="1463.2,492.5 1485.7,499.4 1471.5,513.6" fill="#a2a29c" />
<polygon points="1387.2,573.5 1393.5,566.0 1399.7,572.7 1409.7,574.7 1396.0,589.7" fill="#a2a29c" />
<polygon points="1543.0,433.2 1564.2,411.3 1570.4,409.5 1572.9,417.5 1549.2,443.2" fill="#909090" />
<polygon points="1561.7,413.3 1570.4,410.5 1572.1,417.5 1566.7,422.0" fill="#a0a0a0" />
<polygon points="1544.2,434.5 1550.5,437.4 1548.0,442.4" fill="#a0a0a0" />
<polygon points="1624.9,323.6 1629.9,321.1 1645.4,334.8 1624.9,352.2" fill="#a4a4a4" />
<polygon points="1366.0,615.8 1327.4,654.5 1331.2,659.9 1371.5,620.1" fill="#fdfdfd" stroke="#a9a9a9" stroke-width="0.8" />
<polygon points="1665.3,285.7 1920.0,382.6 1920.0,384.0 1889.0,385.0 1843.0,460.6 1781.9,434.5 1765.7,395.8 1642.4,338.5 1646.0,333.0 1662.0,310.0" fill="#9a9a9a" stroke="#9a9a9a" stroke-width="0.6" />
<polygon points="1684.0,291.0 1687.5,281.5 1691.0,286.0 1696.0,282.5 1697.0,298.0" fill="#9f9f9f" />
<polygon points="1889.0,384.6 1920.0,383.0 1920.0,394.0 1872.9,480.0 1870.4,480.0 1843.0,529.8 1830.5,514.9 1813.1,507.4 1819.3,500.0 1841.7,460.6" fill="#9a9a9a" stroke="#9a9a9a" stroke-width="0.6" />
<polygon points="1889.6,384.1 1895.0,388.0 1858.5,452.0 1832.4,482.0 1824.0,505.0 1813.1,507.4 1819.3,500.0 1841.7,460.6" fill="#8d8d8d" />
<polygon points="1866.1,445.8 1885.0,452.6 1893.1,437.7 1894.5,436.4 1875.6,480.0 1852.6,480.0 1858.0,452.6" fill="#9e9e96" />
<polygon points="1883.7,416.8 1901.2,423.5 1894.5,436.4 1875.6,429.6" fill="#fdfdfd" />
<polygon points="1873.5,431.6 1893.1,437.7 1885.0,452.6 1866.1,445.8" fill="#fdfdfd" />
<polyline points="1875.6,429.6 1894.5,436.4" fill="none" stroke="#b5b5ad" stroke-width="1.2" />
<polyline points="1889.0,386.0 1858.0,450.0" fill="none" stroke="#7a5a48" stroke-width="0.8" />
<polygon points="1855.3,471.5 1871.5,476.9 1843.0,529.8 1830.5,517.4" fill="#ff00ff" />
<polyline points="1841.0,499.0 1858.0,506.0" fill="none" stroke="#c400c4" stroke-width="0.8" />
<polygon points="1663.6,292.4 1674.8,297.4 1665.3,309.8 1661.8,307.4" fill="#a37a3c" />
<polygon points="1677.3,304.9 1714.6,316.1 1710.9,364.7 1673.5,347.2" fill="#545454" />
<polygon points="1714.6,316.1 1720.9,312.3 1717.1,359.7 1710.9,364.7" fill="#6c6c6c" />
<polygon points="1733.3,319.8 1784.4,340.2 1774.5,374.6 1755.8,383.4 1724.6,370.9" fill="#6f3c22" />
<polygon points="1736.5,324.0 1781.0,341.8 1772.5,374.6 1755.8,383.4 1727.8,372.2" fill="#83653a" />
<polygon points="1834.3,361.7 1889.6,384.1 1843.0,460.6 1804.9,444.9" fill="#6f3c22" />
<polygon points="1836.9,366.5 1886.5,386.4 1843.0,460.6 1808.3,446.3" fill="#83653a" />
<polygon points="1765.7,395.8 1800.6,346.0 1781.9,434.5 1749.5,479.3" fill="#8e8e8e" stroke="#8e8e8e" stroke-width="0.8" />
<polygon points="1765.7,395.8 1779.0,374.0 1800.6,346.0 1804.0,348.0 1783.0,380.0" fill="#a3a3a3" />
<polygon points="1642.4,338.5 1765.7,395.8 1749.5,479.3 1641.1,432.5" fill="#999999" stroke="#999999" stroke-width="0.7" />
<polyline points="1642.4,338.5 1765.7,395.8" fill="none" stroke="#a9a9a9" stroke-width="1" />
<polygon points="1757.0,382.1 1765.7,372.1 1777.4,375.9 1769.5,388.3" fill="#fdfdfd" />
<path d="M1721.3,358.0 L1723.7,361.0 M1723.7,358.0 L1721.3,361.0" stroke="#1a1a8c" stroke-width="0.8"/>
<path d="M1812.3,397.5 L1814.7,400.5 M1814.7,397.5 L1812.3,400.5" stroke="#1a1a8c" stroke-width="0.8"/>
<path d="M1713.8,446.5 L1716.2,449.5 M1716.2,446.5 L1713.8,449.5" stroke="#1a1a8c" stroke-width="0.8"/>
<polygon points="1776.5,491.5 1779.4,495.0 1759.5,539.8 1750.8,563.5 1734.6,609.6 1709.7,639.5 1691.0,645.7 1682.2,669.4 1674.8,696.8 1674.8,700.0 1637.4,766.0 1623.7,761.0 1622.4,791.0 1600.0,825.9 1556.7,899.4 1540.5,921.8 1519.3,911.8 1512.5,900.0" fill="#898989" stroke="#898989" stroke-width="0.6" />
<polygon points="1763.2,488.2 1769.0,487.8 1776.5,491.5 1512.5,900.0 1497.0,894.0 1491.9,890.7" fill="#464646" stroke="#464646" stroke-width="0.5" />
<polygon points="1779.4,495.0 1813.1,507.4 1830.5,517.4 1839.3,527.4 1806.9,592.1 1752.0,563.5 1759.5,539.8" fill="#999999" stroke="#999999" stroke-width="0.6" />
<polygon points="1750.8,563.5 1806.9,590.9 1784.4,633.3 1734.6,609.6" fill="#9e9e96" />
<polyline points="1750.8,563.5 1806.9,590.9" fill="none" stroke="#f4f4f4" stroke-width="1.2" />
<polygon points="1691.0,645.7 1745.8,676.9 1753.3,681.9 1735.8,720.0 1729.6,727.4 1727.9,729.7 1703.4,716.0 1697.1,721.5 1674.3,708.5 1674.8,696.8 1682.2,669.4" fill="#999999" stroke="#999999" stroke-width="0.6" />
<polyline points="1708.4,638.3 1712.1,639.5 1705.9,652.5" fill="none" stroke="#f0f0f0" stroke-width="1.1" />
<polyline points="1674.8,696.3 1671.8,705.5" fill="none" stroke="#f0f0f0" stroke-width="1.1" />
<polyline points="1694.8,698.8 1696.0,702.8 1730.8,724.0" fill="none" stroke="#e2e2e2" stroke-width="1.3" />
<polyline points="1675.4,696.0 1676.5,698.8 1649.7,739.4 1646.9,737.7" fill="none" stroke="#e4e4e4" stroke-width="1.4" />
<polygon points="1697.1,723.4 1703.4,716.0 1727.9,729.7 1719.9,746.8 1717.7,749.1 1697.1,736.0" fill="#fdfdfd" stroke="#b5b1af" stroke-width="0.7" />
<polyline points="1697.3,734.5 1718.5,747.5" fill="none" stroke="#a39d9b" stroke-width="2" />
<polygon points="1699.5,740.0 1713.5,748.5 1712.5,757.0 1696.5,749.0" fill="#fdfdfd" stroke="#b5b1af" stroke-width="0.6" />
<ellipse cx="1699" cy="760" rx="12.3" ry="16.3" fill="#fdfdfd" stroke="#a09c9a" stroke-width="0.9" transform="rotate(22 1699 760)"/>
<polygon points="1623.7,761.0 1686.0,801.0 1679.8,822.1 1623.7,789.7" fill="#9c9c95" />
<polyline points="1623.7,761.0 1686.0,801.0" fill="none" stroke="#eeeeee" stroke-width="1.1" />
<polygon points="1594.1,919.3 1614.0,883.2 1615.0,883.2 1632.4,896.9 1624.9,911.8 1616.2,928.0 1596.6,928.0" fill="#111" />
<polygon points="1586.6,921.5 1596.6,925.0 1597.0,928.0 1590.0,928.0" fill="#18c018" />
<polygon points="1308.7,741.1 1347.4,766.8 1345.4,774.3 1308.7,753.6" fill="#3f3f3f" />
<polygon points="1308.7,753.6 1344.9,774.8 1342.4,781.0 1308.7,761.0" fill="#dfe7ec" />
<polygon points="1396.0,822.1 1404.7,815.9 1545.5,928.0 1524.3,928.0" fill="#f3f6f8" stroke="#9aa3a9" stroke-width="0.8" />
<polyline points="1400.0,819.0 1535.0,928.0" fill="none" stroke="#c9d6de" stroke-width="2" />
<polygon points="1424.6,852.0 1439.6,848.3 1472.0,872.0 1464.5,881.9 1424.6,859.5" fill="#8c8f91" />
<polyline points="1539.3,884.4 1594.1,928.0" fill="none" stroke="#8a8a8a" stroke-width="0.9" />
<polyline points="1556.7,899.4 1586.6,919.3" fill="none" stroke="#8a8a8a" stroke-width="0.9" />
<polyline points="1540.0,922.0 1568.0,928.0" fill="none" stroke="#777" stroke-width="1.5" />
<polygon points="1356.1,716.6 1370.1,701.8 1377.1,708.0 1384.9,713.0 1382.6,720.8 1372.9,730.2 1364.6,726.7" fill="#ff00ff" />
<polygon points="1365.4,719.7 1377.1,708.0 1384.9,713.0 1382.6,720.8 1372.9,730.2 1364.6,726.7" fill="#8e008e" />
<polyline points="1313.0,696.0 1370.0,742.0" fill="none" stroke="#979797" stroke-width="0.9" />
<polyline points="1309.0,706.0 1365.0,750.0" fill="none" stroke="#979797" stroke-width="0.9" />
<polygon points="1586.5,463.2 1614.5,486.6 1628.5,497.5 1672.1,522.4 1669.0,525.0 1650.0,517.0 1656.6,530.2 1651.9,531.7 1645.5,520.0 1606.7,497.5 1598.5,492.0 1598.9,502.1 1594.3,499.0 1593.5,487.0 1584.9,471.0" fill="#0f93c8" />
<polygon points="1575.6,464.8 1601.3,434.4 1608.3,435.2 1583.4,466.3 1584.1,477.2 1577.1,478.8" fill="#12a3dd" stroke="#0f93c8" stroke-width="0.8" stroke-linejoin="round"/>
<polygon points="1586.5,460.9 1613.7,432.1 1634.8,457.0 1653.5,466.3 1694.0,485.0 1696.3,491.2 1675.3,520.8 1672.1,522.4 1628.5,497.5 1614.5,486.6 1586.5,463.2" fill="#13b4f3" stroke="#10a4de" stroke-width="0.8" stroke-linejoin="round"/>
<polygon points="1507.0,552.0 1530.0,574.0 1549.0,590.0 1596.0,621.5 1599.0,623.0 1581.6,624.5 1586.0,630.0 1581.0,631.0 1575.0,620.5 1528.0,592.0 1524.0,598.0 1519.5,596.0 1519.0,586.0 1516.8,572.2 1503.9,567.7" fill="#0f93c8" />
<polygon points="1495.3,556.0 1527.2,519.4 1535.8,520.2 1508.5,549.0 1503.9,567.7 1498.4,564.6" fill="#12a3dd" stroke="#0f93c8" stroke-width="0.8" stroke-linejoin="round"/>
<polygon points="1507.0,549.0 1536.6,519.4 1567.7,547.5 1580.2,555.3 1622.0,577.0 1625.5,586.0 1600.0,621.0 1596.0,621.5 1549.0,590.0 1530.0,574.0 1507.0,552.0" fill="#13b4f3" stroke="#10a4de" stroke-width="0.8" stroke-linejoin="round"/>
<polygon points="1400.2,673.5 1442.3,710.0 1503.0,749.5 1507.7,750.0 1503.0,753.0 1440.0,712.0 1402.0,683.0" fill="#0f93c8" />
<polygon points="1390.9,671.7 1429.8,628.0 1437.6,631.2 1400.2,673.2 1403.4,681.0 1395.6,679.4" fill="#12a3dd" stroke="#0f93c8" stroke-width="0.8" stroke-linejoin="round"/>
<polygon points="1400.2,671.7 1437.6,631.2 1473.5,665.4 1535.8,704.4 1536.5,707.5 1507.7,748.0 1503.0,748.0 1442.3,709.0 1400.2,673.5" fill="#13b4f3" stroke="#10a4de" stroke-width="0.8" stroke-linejoin="round"/>
<polygon points="1634.8,457.0 1653.5,466.3 1630.0,498.5 1614.5,486.6" fill="#18bdf9" />
<polygon points="1567.7,547.5 1584.0,557.5 1557.0,595.5 1538.0,581.0" fill="#18bdf9" />
<polygon points="1473.5,665.4 1492.0,677.0 1461.0,721.0 1442.3,709.0" fill="#18bdf9" />
<polygon points="1646.4,407.1 1664.4,414.9 1663.6,438.3 1653.5,450.7 1651.9,460.1 1637.9,463.2 1635.5,458.5 1622.3,436.7 1623.9,428.2 1633.2,421.2" fill="#ff00ff" />
<polyline points="1646.4,409.0 1644.9,403.2 1667.5,413.4 1665.9,439.8" fill="none" stroke="#ff00ff" stroke-width="1.2" />
<polygon points="1647.5,420.0 1659.5,421.5 1652.0,436.0" fill="#c45ac4" />
<polygon points="1552.9,491.4 1563.1,482.8 1569.3,485.2 1568.5,494.5 1558.4,502.3 1554.5,499.2" fill="#ff00ff" />
<polygon points="1558.4,502.3 1568.5,494.5 1569.3,485.2 1562.0,492.0" fill="#d400d4" />
<polygon points="1572.4,491.4 1594.2,502.3 1589.5,527.2 1581.0,539.7 1584.9,552.1 1569.3,555.3 1567.0,549.0 1545.9,521.0 1549.0,516.3 1558.4,508.5" fill="#ff00ff" />
<polyline points="1572.4,486.7 1595.8,500.7 1593.4,527.2" fill="none" stroke="#ff00ff" stroke-width="1.3" />
<polygon points="1572.0,505.0 1585.0,508.0 1577.0,522.0" fill="#d060d0" />
<polygon points="1470.7,580.9 1485.7,573.5 1491.9,585.9 1490.5,592.0 1475.7,597.1 1472.0,592.0" fill="#ff00ff" />
<polygon points="1475.7,597.1 1490.5,592.0 1491.9,585.9 1478.0,592.0" fill="#d400d4" />
<polygon points="1491.9,589.6 1513.1,600.9 1517.1,618.7 1498.4,645.2 1489.0,651.4 1492.1,668.5 1485.9,674.8 1473.5,671.7 1471.9,665.4 1481.2,660.7 1479.7,651.4 1457.9,631.2 1457.9,620.2 1472.0,599.6" fill="#ff00ff" />
<polyline points="1493.1,584.7 1515.6,597.1 1519.3,620.8" fill="none" stroke="#ff00ff" stroke-width="1.3" />
<polygon points="1483.0,612.0 1497.0,615.0 1489.0,631.0" fill="#d060d0" />
<ellipse cx="1485.5" cy="656" rx="2.3" ry="3.6" fill="#fff" transform="rotate(25 1485.5 656)"/>
<polyline points="1459.0,632.0 1481.0,653.0" fill="none" stroke="#e8e8f0" stroke-width="1.2" />
<polygon points="1636.0,458.0 1652.0,455.0 1652.5,461.0 1638.0,463.5" fill="#ff00ff" />
<polygon points="1595.8,514.8 1611.3,511.7 1623.8,521.0 1626.9,528.8 1616.0,536.6 1605.1,533.5" fill="#6f7691" />
<polygon points="1595.8,514.8 1602.0,514.0 1609.8,532.7 1605.1,533.5" fill="#555b74" />
<polyline points="1602.0,539.7 1609.8,537.3 1616.0,542.8" fill="none" stroke="#222" stroke-width="1.3" />
<polyline points="1609.8,534.5 1609.8,537.3" fill="none" stroke="#222" stroke-width="1.3" />
<polygon points="1521.0,603.1 1535.8,600.0 1551.3,604.7 1557.6,614.0 1556.8,620.2 1543.5,627.3 1532.6,629.6" fill="#6f7691" />
<polygon points="1521.0,603.1 1526.4,602.3 1537.3,626.5 1532.6,629.6" fill="#555b74" />
<polyline points="1533.5,631.5 1544.0,629.0 1547.4,634.3" fill="none" stroke="#222" stroke-width="1.3" />
<polygon points="1418.4,740.0 1437.1,726.7 1448.0,733.0 1453.4,750.1 1449.5,757.9 1432.4,764.9 1429.3,761.0" fill="#6f7691" />
<polygon points="1407.5,736.9 1418.4,740.0 1429.3,761.0 1423.1,761.8" fill="#4d5268" />
<polyline points="1443.3,760.0 1444.9,764.9" fill="none" stroke="#222" stroke-width="1.4" /></g></svg>
<div class="abs" style="left:1308px;top:77px;width:612px;height:69px;background:#e8eaea;"></div><div class="abs" style="left:1308px;top:146px;width:612px;height:1px;background:#c1c3c4;"></div>
<div class="abs" style="left:1644px;top:77px;width:1px;height:69px;background:#c6c8c9;"></div><div class="abs" style="left:1833px;top:77px;width:1px;height:69px;background:#c6c8c9;"></div>
<svg style="left:1335px;top:80px" width="570" height="64" viewBox="1335 80 570 64" fill="none">
<rect x="1342.6" y="85.6" width="33.8" height="31.8" fill="#fff" stroke="#3a3d40" stroke-width="1"/><rect x="1345.8" y="90.0" width="3" height="2.8" fill="#1b9ad6"/><path d="M1352.2,91.4 H1372.8" stroke="#44474a" stroke-width="0.8"/><rect x="1345.8" y="95.0" width="3" height="2.8" fill="#1b9ad6"/><path d="M1352.2,96.4 H1372.8" stroke="#44474a" stroke-width="0.8"/><rect x="1345.8" y="99.89999999999999" width="3" height="2.8" fill="#1b9ad6"/><path d="M1352.2,101.3 H1372.8" stroke="#44474a" stroke-width="0.8"/><rect x="1345.8" y="104.89999999999999" width="3" height="2.8" fill="#1b9ad6"/><path d="M1352.2,106.3 H1372.8" stroke="#44474a" stroke-width="0.8"/><rect x="1345.8" y="110.0" width="3" height="2.8" fill="#1b9ad6"/><path d="M1352.2,111.4 H1372.8" stroke="#44474a" stroke-width="0.8"/>
<circle cx="1696.6" cy="117.3" r="11.6" stroke="#26292b" stroke-width="1.2"/>
<path d="M1704.9,126 L1718.8,139.4" stroke="#26292b" stroke-width="1.3"/>
<rect x="1764.2" y="105.2" width="33.6" height="34.7" fill="#555b5b"/>
<path d="M1874.85,83.98 L1881.15,83.98 L1882.20,88.57 L1887.10,91.39 L1891.60,90.01 L1894.75,95.47 L1891.30,98.67 L1891.30,104.33 L1894.75,107.53 L1891.60,112.99 L1887.10,111.61 L1882.20,114.43 L1881.15,119.02 L1874.85,119.02 L1873.80,114.43 L1868.90,111.61 L1864.40,112.99 L1861.25,107.53 L1864.70,104.33 L1864.70,98.67 L1861.25,95.47 L1864.40,90.01 L1868.90,91.39 L1873.80,88.57 Z" fill="#fff" stroke="#26292b" stroke-width="1.2" stroke-linejoin="round"/><circle cx="1878" cy="101.5" r="7.6" fill="#fff" stroke="#26292b" stroke-width="1.2"/>
</svg>
<span class="t" style="left:1323.54px;top:123.05px;font-size:14.5px;color:#3d4044;transform:scaleX(0.9723);transform-origin:0 0">Hide details</span>
<span class="t" style="left:1412.36px;top:90.30px;font-size:18px;color:#3d4044;transform:scaleX(0.9763);transform-origin:0 0">ROOM 04.018 - CONSU...</span>
<span class="t" style="left:1412.89px;top:116.30px;font-size:18px;letter-spacing:0.249px;color:#3d4044">23065134282</span>
<span class="t" style="left:1665.84px;top:87.05px;font-size:14.5px;color:#3d4044;transform:scaleX(0.9750);transform-origin:0 0">Hide details</span>
<span class="t" style="left:1753.10px;top:87.05px;font-size:14.5px;color:#3d4044;transform:scaleX(0.9935);transform-origin:0 0">Switch to</span>
<span class="t" style="left:1770.25px;top:114.80px;font-size:16px;letter-spacing:1.173px;font-weight:bold;color:#fff">2D</span>
<span class="t" style="left:1854.88px;top:122.05px;font-size:14.5px;color:#3d4044;transform:scaleX(0.9410);transform-origin:0 0">Settings</span>
<div class="abs" style="left:1308px;top:928px;width:612px;height:1px;background:#b9bbbc;"></div><div class="abs" style="left:1308px;top:929px;width:612px;height:34px;background:#e8eaea;"></div>
<svg style="left:1308px;top:929px" width="612" height="34" viewBox="1308 929 612 34"><rect x="1322.7" y="941.7" width="11.6" height="11.6" fill="#78943c" stroke="#858585" stroke-width="1"/><rect x="1340.7" y="941.7" width="11.6" height="11.6" fill="#b4a2cb" stroke="#858585" stroke-width="1"/><rect x="1357.7" y="941.7" width="12.7" height="11.6" fill="#b8dfea" stroke="#858585" stroke-width="1"/><rect x="1379.6" y="941.7" width="11.8" height="11.6" fill="#f26428" stroke="#858585" stroke-width="1"/><path d="M1898.8,947.8 L1903.7,942.9 L1908.6,947.8" stroke="#555b5b" stroke-width="2.4" fill="none"/></svg>
<div class="abs" style="left:83px;top:77px;width:5px;height:886px;background:linear-gradient(to right,rgba(70,72,75,.50) 0,rgba(70,72,75,.28) 35%,rgba(70,72,75,.10) 65%,rgba(70,72,75,0) 100%)"></div>
<div class="abs" style="left:686px;top:77px;width:9px;height:886px;background:linear-gradient(to right,rgba(80,82,86,0) 0,rgba(80,82,86,.08) 30%,rgba(80,82,86,.25) 60%,rgba(80,82,86,.48) 88%,rgba(80,82,86,.55) 100%)"></div>
<div class="abs" style="left:1299px;top:77px;width:9px;height:886px;background:linear-gradient(to right,rgba(80,82,86,0) 0,rgba(80,82,86,.08) 30%,rgba(80,82,86,.25) 60%,rgba(80,82,86,.48) 88%,rgba(80,82,86,.55) 100%)"></div>
</div>
</body>
</html>
